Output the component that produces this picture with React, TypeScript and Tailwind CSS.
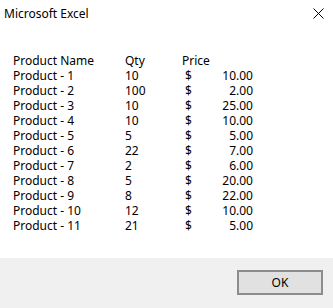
const ROWS = [
  ["Product - 1", "10", "10.00"],
  ["Product - 2", "100", "2.00"],
  ["Product - 3", "10", "25.00"],
  ["Product - 4", "10", "10.00"],
  ["Product - 5", "5", "5.00"],
  ["Product - 6", "22", "7.00"],
  ["Product - 7", "2", "6.00"],
  ["Product - 8", "5", "20.00"],
  ["Product - 9", "8", "22.00"],
  ["Product - 10", "12", "10.00"],
  ["Product - 11", "21", "5.00"],
];

export default function App() {
  return (
    <div className="w-[333px] h-[308px] bg-white flex flex-col font-['Noto_Sans',sans-serif] text-[12px] text-black overflow-hidden">
      {/* title bar */}
      <div className="h-[27px] flex items-center justify-between pl-[4px] pr-[9px]">
        <span className="text-[12px] leading-none">Microsoft Excel</span>
        <svg width="11" height="11" viewBox="0 0 11 11" className="text-black">
          <path d="M0.5 0.5 L10.5 10.5 M10.5 0.5 L0.5 10.5" stroke="currentColor" strokeWidth="1" />
        </svg>
      </div>

      {/* message */}
      <div className="flex-1 pt-[26px] pl-[13px]">
        <div className="grid grid-cols-[112px_57px_71px] leading-[15px]">
          <span>Product Name</span>
          <span>Qty</span>
          <span>Price</span>
          {ROWS.map(([name, qty, price]) => (
            <div key={name} className="contents">
              <span>{name}</span>
              <span>{qty}</span>
              <span className="flex justify-between pl-[3px]">
                <span>$</span>
                <span>{price}</span>
              </span>
            </div>
          ))}
        </div>
      </div>

      {/* footer */}
      <div className="h-[50px] bg-[#f0f0f0] flex items-start justify-end pt-[12px] pr-[10px]">
        <button className="w-[86px] h-[25px] border-2 border-[#8c8c8c] bg-[#e1e1e1] text-[12px] leading-none">
          OK
        </button>
      </div>
    </div>
  );
}
